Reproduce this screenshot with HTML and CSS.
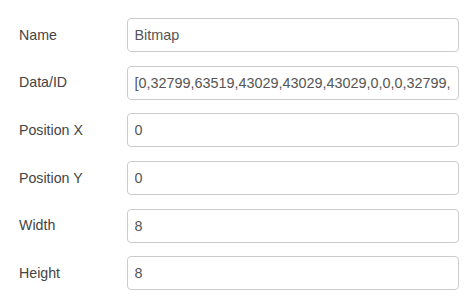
FILE: index.html
```html
<!DOCTYPE html>
<html>
<head>
<meta charset="utf-8">
<link rel="stylesheet" href="styles.css">
</head>
<body>
<form class="props">
  <div class="row"><label class="lbl">Name</label><input class="field" type="text" value="Bitmap"></div>
  <div class="row"><label class="lbl">Data/ID</label><input class="field" type="text" value="[0,32799,63519,43029,43029,43029,0,0,0,32799,63519,43029,43029,43029,0,0,0]"></div>
  <div class="row"><label class="lbl">Position X</label><input class="field" type="text" value="0"></div>
  <div class="row"><label class="lbl">Position Y</label><input class="field" type="text" value="0"></div>
  <div class="row"><label class="lbl">Width</label><input class="field" type="text" value="8"></div>
  <div class="row"><label class="lbl">Height</label><input class="field" type="text" value="8"></div>
</form>
</body>
</html>
```
FILE: styles.css
```css
html, body {
  margin: 0;
  padding: 0;
  background: #ffffff;
}
.props {
  display: flex;
  flex-direction: column;
  gap: 13.7px;
  padding: 18px 15px 0 19px;
  font-family: "Liberation Sans", Arial, sans-serif;
  font-size: 14px;
}
.row {
  display: flex;
  align-items: center;
  height: 34px;
}
.lbl {
  width: 107.5px;
  flex: none;
  color: #444444;
  font-size: 14.2px;
  margin-top: -1px;
}
.field {
  box-sizing: border-box;
  width: 333px;
  height: 34px;
  margin: 0;
  padding: 0 7px;
  border: 1px solid #cccccc;
  border-radius: 4px;
  background: #ffffff;
  color: #555555;
  font-family: "Liberation Sans", Arial, sans-serif;
  font-size: 14.4px;
  outline: none;
}
```
